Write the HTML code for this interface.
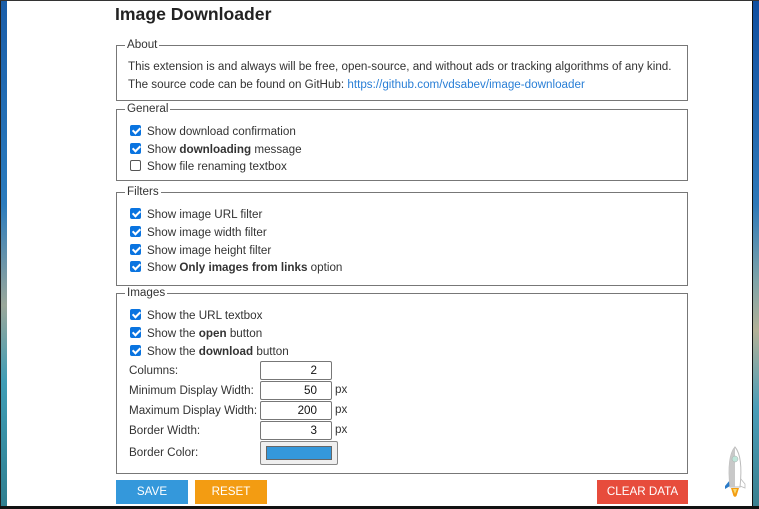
<!DOCTYPE html>
<html><head><style>
*{margin:0;padding:0;box-sizing:border-box}
body{width:759px;height:509px;overflow:hidden;background:#fff;font-family:"Liberation Sans",Arial,sans-serif;font-size:11.65px;color:#333;position:relative}
.l{position:absolute;left:0;top:0;width:7px;height:509px;background:linear-gradient(#1a5da8,#2a7bbd 40%,#9aa79a 60%,#3f9db5 75%,#2f7e8f);border-left:1px solid #222}
.r{position:absolute;right:0;top:0;width:7px;height:509px;background:linear-gradient(#0f4ea0,#2d78b8 40%,#7ea3a8 55%,#b3b197 65%,#4a9db8 80%,#3a7f8e);border-left:1px solid #111}
.t{position:absolute;left:0;top:0;width:759px;height:1px;background:#333}
.b{position:absolute;left:0;top:506px;width:759px;height:3px;background:#111}
.a{position:absolute;white-space:nowrap}
h1{position:absolute;left:115px;top:4px;font-size:17.6px;font-weight:bold;color:#222}
.fs{position:absolute;left:116px;width:572px;border:1px solid #777}
.lg{position:absolute;left:8px;top:-8px;background:#fff;padding:0 2px 0 2px;line-height:14px}
.cb{position:absolute;left:130px;width:11px;height:11px;background:#0a74e0;border-radius:2px}
.cb::after{content:"";position:absolute;left:3.5px;top:1px;width:3px;height:6px;border:solid #fff;border-width:0 2px 2px 0;transform:rotate(45deg)}
.cb.u{background:#fff;border:1px solid #555}
.cb.u::after{display:none}
.in{position:absolute;left:260px;width:72px;height:19px;border:1px solid #777;border-radius:2px;text-align:right;padding-right:14px;line-height:17px;color:#111}
.btn{position:absolute;top:480px;height:24px;color:#fff;text-align:center;line-height:24px}
a{color:#2a7fd6;text-decoration:none}
</style></head><body>
<div class="l"></div><div class="r"></div><div class="t"></div>
<h1>Image Downloader</h1>

<div class="fs" style="top:45px;height:56px"><span class="lg">About</span></div>
<div class="a" style="left:128px;top:60px">This extension is and always will be free, open-source, and without ads or tracking algorithms of any kind.</div>
<div class="a" style="left:128px;top:78px">The source code can be found on GitHub: <a>https://github.com/vdsabev/image-downloader</a></div>

<div class="fs" style="top:109px;height:72px"><span class="lg">General</span></div>
<div class="cb" style="top:125px"></div><div class="a" style="left:147px;top:125px">Show download confirmation</div>
<div class="cb" style="top:143px"></div><div class="a" style="left:147px;top:143px">Show <b>downloading</b> message</div>
<div class="cb u" style="top:160px"></div><div class="a" style="left:147px;top:160px">Show file renaming textbox</div>

<div class="fs" style="top:192px;height:94px"><span class="lg">Filters</span></div>
<div class="cb" style="top:208px"></div><div class="a" style="left:147px;top:208px">Show image URL filter</div>
<div class="cb" style="top:226px"></div><div class="a" style="left:147px;top:226px">Show image width filter</div>
<div class="cb" style="top:244px"></div><div class="a" style="left:147px;top:244px">Show image height filter</div>
<div class="cb" style="top:261px"></div><div class="a" style="left:147px;top:261px">Show <b>Only images from links</b> option</div>

<div class="fs" style="top:293px;height:181px"><span class="lg">Images</span></div>
<div class="cb" style="top:309px"></div><div class="a" style="left:147px;top:309px">Show the URL textbox</div>
<div class="cb" style="top:327px"></div><div class="a" style="left:147px;top:327px">Show the <b>open</b> button</div>
<div class="cb" style="top:345px"></div><div class="a" style="left:147px;top:345px">Show the <b>download</b> button</div>

<div class="a" style="left:129px;top:364px">Columns:</div><div class="in" style="top:361px">2</div>
<div class="a" style="left:129px;top:384px">Minimum Display Width:</div><div class="in" style="top:381px">50</div><div class="a" style="left:335px;top:383px">px</div>
<div class="a" style="left:129px;top:404px">Maximum Display Width:</div><div class="in" style="top:401px">200</div><div class="a" style="left:335px;top:403px">px</div>
<div class="a" style="left:129px;top:424px">Border Width:</div><div class="in" style="top:421px">3</div><div class="a" style="left:335px;top:423px">px</div>
<div class="a" style="left:129px;top:446px">Border Color:</div>
<div style="position:absolute;left:260px;top:441px;width:78px;height:24px;border:1px solid #888;border-radius:2px;background:#efefef;padding:4px 5px"><div style="width:100%;height:100%;background:#3498db;border:1px solid #666"></div></div>

<div class="btn" style="left:116px;width:72px;background:#3498db">SAVE</div>
<div class="btn" style="left:195px;width:72px;background:#f39c12">RESET</div>
<div class="btn" style="left:597px;width:91px;background:#e74c3c">CLEAR DATA</div>

<svg style="position:absolute;left:722px;top:446px" width="26" height="52" viewBox="0 0 26 52">
<path d="M8 34 L3 40 L3 43 L8 40 Z" fill="#2a7bc8"/>
<path d="M18 32 L23 38 L23 42 L18 40 Z" fill="#fff" stroke="#bbb" stroke-width="0.8"/>
<path d="M13 1 C7 8 6 22 8 41 L18 41 C20 22 19 8 13 1 Z" fill="#fff" stroke="#bbb" stroke-width="1"/>
<path d="M13 1 C7 8 6 22 8 41 L13 41 Z" fill="#c8c8c8"/>
<circle cx="13" cy="13" r="3" fill="#bfe6da" stroke="#aaa" stroke-width="0.5"/>
<path d="M9 42 L17 42 L14.5 50 L13 51 L11.5 50 Z" fill="#f39c12"/>
<path d="M11 43 L15 43 L13 48 Z" fill="#f7dc6f"/>
</svg>
<div class="b"></div>
</body></html>
